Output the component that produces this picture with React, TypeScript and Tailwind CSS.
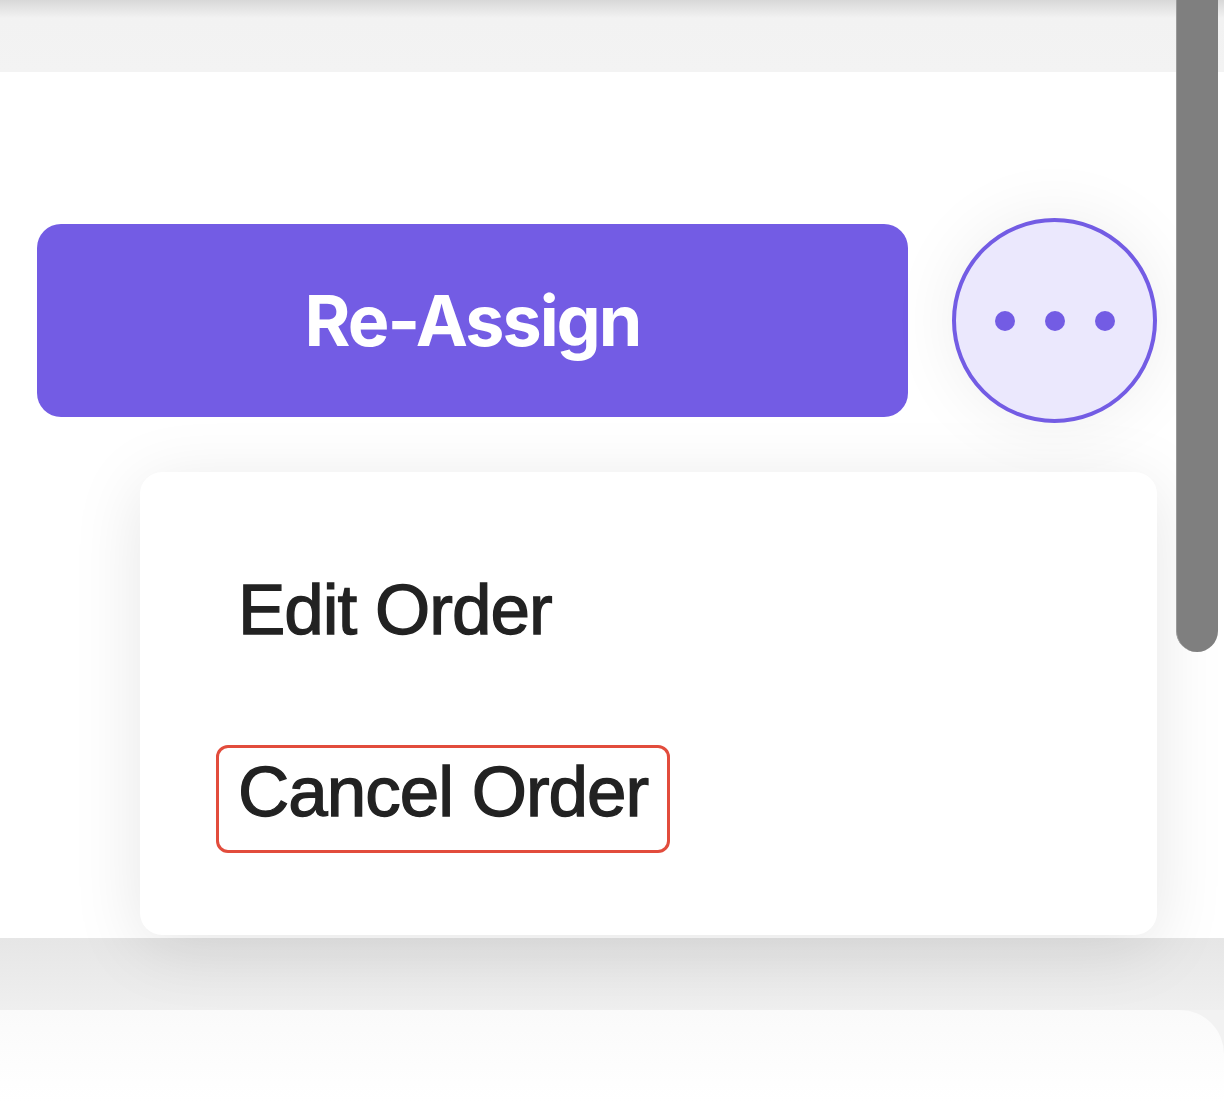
export default function App() {
  return (
    <div className="relative h-[1102px] w-[1224px] overflow-hidden bg-[#f2f2f2] font-['Liberation_Sans',Arial,sans-serif]">
      {/* strip above the card, with the shadow of whatever sits on top */}
      <div className="h-[72px] bg-gradient-to-b from-[#d8d8d8] via-[#f2f2f2] via-25% to-[#f3f3f3]" />

      {/* order card */}
      <div className="relative h-[866px] bg-white">
        <div className="flex items-center gap-[44px] pl-[37px] pt-[146px]">
          <button className="flex h-[193px] w-[871px] items-center justify-center rounded-[24px] bg-[#735ce4] font-['Inter',sans-serif] text-[70px] font-bold tracking-[-2px] text-white">
            Re-Assign
          </button>
          <button className="flex h-[205px] w-[205px] items-center justify-center gap-[30px] rounded-full border-[4px] border-[#735ce4] bg-[#ebe8fd] shadow-[0_0_70px_rgba(0,0,0,0.07)]">
            <span className="h-[20px] w-[20px] rounded-full bg-[#735ce4]" />
            <span className="h-[20px] w-[20px] rounded-full bg-[#735ce4]" />
            <span className="h-[20px] w-[20px] rounded-full bg-[#735ce4]" />
          </button>
        </div>

        {/* actions menu */}
        <div className="absolute left-[140px] top-[400px] h-[463px] w-[1017px] rounded-[22px] bg-white pl-[98px] pt-[102px] shadow-[0_12px_70px_rgba(0,0,0,0.1)]">
          <div className="text-[71px] leading-none tracking-[-1px] text-[#222222] [-webkit-text-stroke:1.3px_#222222]">
            Edit Order
          </div>
          <div className="-ml-[22px] mt-[100px] inline-block rounded-[12px] border-[3px] border-[#e24c3c] pb-[23px] pl-[19px] pr-[19px] pt-[8px]">
            <div className="text-[71px] leading-none tracking-[-1px] text-[#222222] [-webkit-text-stroke:1.3px_#222222]">
              Cancel Order
            </div>
          </div>
        </div>
      </div>

      <div className="h-[72px] bg-gradient-to-b from-[#e6e6e6] to-[#efefef]" />
      <div className="h-[92px] rounded-tr-[44px] bg-gradient-to-b from-[#fafafa] to-white" />

      {/* scrollbar thumb */}
      <div className="absolute right-[6px] top-0 h-[652px] w-[42px] rounded-b-full border-l border-[#9a9a9a] bg-[#7f7f7f]" />
    </div>
  );
}
